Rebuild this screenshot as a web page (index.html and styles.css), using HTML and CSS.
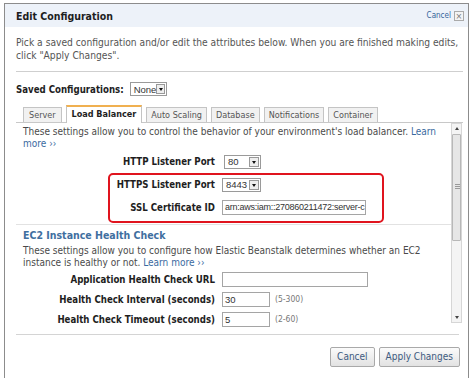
FILE: index.html
```html
<!DOCTYPE html>
<html>
<head>
<meta charset="utf-8">
<link rel="stylesheet" href="styles.css">
</head>
<body>
<div class="dialog">
  <div class="header">
    <div class="title">Edit Configuration</div>
    <div class="close"><span class="close-link">Cancel</span><span class="close-x">×</span></div>
  </div>
  <div class="body">
    <p class="intro">Pick a saved configuration and/or edit the attributes below. When you are finished making edits, click "Apply Changes".</p>
    <div class="rule"></div>
    <div class="saved">
      <span class="saved-label">Saved Configurations:</span>
      <span class="select sel-none"><span class="val">None</span><span class="arrow"></span></span>
    </div>
    <div class="tabs">
      <span class="tab t-server">Server</span>
      <span class="tab active t-lb">Load Balancer</span>
      <span class="tab">Auto Scaling</span>
      <span class="tab">Database</span>
      <span class="tab">Notifications</span>
      <span class="tab">Container</span>
    </div>
    <div class="panel">
      <div class="content">
        <p class="desc">These settings allow you to control the behavior of your environment's load balancer. <span class="link">Learn more ››</span></p>
        <div class="row">
          <span class="label">HTTP Listener Port</span>
          <span class="select sel-port sel-80"><span class="val">80</span><span class="arrow"></span></span>
        </div>
        <div class="row">
          <span class="label">HTTPS Listener Port</span>
          <span class="select sel-port"><span class="val">8443</span><span class="arrow"></span></span>
        </div>
        <div class="row">
          <span class="label">SSL Certificate ID</span>
          <span class="input in-cert">arn:aws:iam::270860211472:server-c</span>
        </div>
        <div class="highlight"></div>
        <div class="subrule"></div>
        <h3 class="section">EC2 Instance Health Check</h3>
        <p class="desc">These settings allow you to configure how Elastic Beanstalk determines whether an EC2 instance is healthy or not. <span class="link">Learn more ››</span></p>
        <div class="row hrow">
          <span class="label">Application Health Check URL</span>
          <span class="input in-url"></span>
        </div>
        <div class="row hrow">
          <span class="label">Health Check Interval (seconds)</span>
          <span class="input in-num">30</span>
          <span class="hint">(5-300)</span>
        </div>
        <div class="row hrow">
          <span class="label">Health Check Timeout (seconds)</span>
          <span class="input in-num">5</span>
          <span class="hint">(2-60)</span>
        </div>
      </div>
      <div class="scrollbar">
        <div class="sb-btn sb-up"></div>
        <div class="sb-track"><div class="sb-thumb"><span class="grip"></span></div></div>
        <div class="sb-btn sb-down"></div>
      </div>
    </div>
    <div class="rule foot-rule"></div>
    <div class="footer">
      <span class="btn">Cancel</span>
      <span class="btn">Apply Changes</span>
    </div>
  </div>
</div>
</body>
</html>
```

FILE: styles.css
```css
* { box-sizing: border-box; }
html, body { margin: 0; padding: 0; background: #fff; }
body {
  width: 474px;
  height: 378px;
  overflow: hidden;
  font-family: "DejaVu Sans Condensed", "DejaVu Sans", sans-serif;
  font-size: 10px;
  color: #4a4a4a;
}
.dialog {
  margin: 3px 0 0 4px;
  width: 465px;
  height: 380px;
  border: 1px solid #8c8c8c;
  border-bottom: none;
  background: #fff;
}
.header {
  height: 23px;
  background: #edf2f9;
  display: flex;
  align-items: center;
  justify-content: space-between;
  padding: 0 4px 0 11px;
}
.title {
  font-weight: bold;
  font-size: 10.5px;
  color: #1e1e1e;
}
.close { display: flex; align-items: center; gap: 3px; }
.close-link { color: #35649a; font-size: 8px; }
.close-x {
  width: 10px; height: 10px;
  border: 1px solid #aaa;
  background: #f4f4f4;
  color: #777;
  font-size: 9px;
  line-height: 8px;
  text-align: center;
}
.body { padding: 0 5px 0 11px; }
.intro {
  margin: 9px 0 0;
  line-height: 13px;
  font-size: 10.2px;
  color: #555;
}
.rule { height: 1px; background: #cfcfcf; margin-top: 9px; }
.saved {
  display: flex;
  align-items: center;
  gap: 6px;
  margin-top: 10px;
}
.saved-label { font-weight: bold; font-size: 9.6px; color: #1e1e1e; }
.select {
  display: inline-flex;
  align-items: center;
  height: 14px;
  border: 1px solid #9a9a9a;
  background: #fff;
  padding: 0 1px 0 3px;
  justify-content: space-between;
  font-family: "Liberation Sans", sans-serif;
  font-size: 9.5px;
  color: #333;
}
.sel-none { width: 37px; }
.sel-port { width: 39px; }
.sel-80 { margin-left: 2px; width: 37px; }
.arrow {
  width: 10px; height: 10px;
  border: 1px solid #999;
  background: #eee;
  position: relative;
}
.arrow::after {
  content: "";
  position: absolute;
  left: 2px; top: 3px;
  border-left: 2.5px solid transparent;
  border-right: 2.5px solid transparent;
  border-top: 3px solid #111;
}
.tabs {
  display: flex;
  align-items: flex-end;
  gap: 4px;
  margin-top: 9px;
  padding-left: 7px;
  height: 17px;
}
.tab {
  height: 15px;
  border: 1px solid #c4c4c4;
  border-bottom: none;
  background: #f1f1f1;
  color: #555;
  font-size: 9px;
  line-height: 14px;
  padding: 0 4px;
}
.t-server { padding: 0 5px; }
.tab.active {
  height: 18px;
  background: #fff;
  border-top: 2px solid #f0b050;
  color: #1e1e1e;
  font-weight: bold;
  line-height: 15px;
  padding: 0 5px;
  margin-bottom: -1px;
  position: relative;
}
.panel {
  display: flex;
  height: 205px;
  border-top: 1px solid #c8c8c8;
  width: 447px;
}
.content {
  flex: 1;
  position: relative;
  overflow: hidden;
  padding: 3px 0 0 7px;
}
.desc { margin: 0; line-height: 12px; color: #4a4a4a; }
.link { color: #3a6aa0; }
.row {
  display: flex;
  align-items: center;
  height: 23px;
}
.label {
  width: 199px;
  text-align: right;
  font-weight: bold;
  color: #1e1e1e;
  font-size: 9.6px;
  padding-right: 7px;
  flex: none;
}
.input {
  height: 15px;
  border: 1px solid #a5a5a5;
  background: #fff;
  font-family: "Liberation Sans", sans-serif;
  font-size: 9px;
  color: #333;
  padding: 0 2px;
  line-height: 13px;
  white-space: nowrap;
  overflow: hidden;
}
.in-cert { width: 144px; letter-spacing: -0.25px; }
.in-url { width: 146px; }
.in-num { width: 48px; font-size: 9.5px; }
.hint { margin-left: 5px; color: #777; font-size: 8.5px; }
.highlight {
  position: absolute;
  left: 92px;
  top: 50px;
  width: 276px;
  height: 50px;
  border: 2px solid #e0141e;
  border-radius: 5px;
}
.subrule { height: 1px; background: #e2e2e2; margin: 5px 0 0 -7px; }
.section {
  margin: 4px 0 3px;
  font-size: 10.5px;
  line-height: 13px;
  font-weight: bold;
  color: #3f6f9f;
}
.hrow { height: 20px; }
.scrollbar {
  width: 11px;
  display: flex;
  flex-direction: column;
  border: 1px solid #d6d6d6;
  background: #f4f4f4;
  margin-right: 1px;
  height: 200px;
}
.sb-btn { height: 10px; position: relative; }
.sb-up::after, .sb-down::after {
  content: "";
  position: absolute;
  left: 2.5px;
  border-left: 2.5px solid transparent;
  border-right: 2.5px solid transparent;
}
.sb-up::after { top: 3px; border-bottom: 3px solid #444; }
.sb-down::after { top: 4px; border-top: 3px solid #444; }
.sb-track { flex: 1; }
.sb-thumb {
  height: 107px;
  border: 1px solid #b8b8b8;
  background: #e6e6e6;
  border-radius: 1px;
  position: relative;
}
.grip {
  position: absolute;
  left: 2px; top: 49px;
  width: 5px; height: 5px;
  border-top: 1px solid #999;
  border-bottom: 1px solid #999;
}
.grip::after {
  content: "";
  position: absolute;
  left: 0; top: 1px;
  width: 5px; height: 1px;
  background: #999;
}
.foot-rule { margin-top: 7px; width: 443px; background: #d4d4d4; }
.footer {
  display: flex;
  justify-content: flex-end;
  gap: 4px;
  margin-top: 12px;
  padding-right: 3px;
}
.btn {
  height: 20px;
  border: 1px solid #a9a9a9;
  border-radius: 2px;
  background: linear-gradient(#fbfbfb, #e2e2e2);
  color: #3d5a80;
  font-size: 10px;
  line-height: 18px;
  padding: 0 6px;
}
```
